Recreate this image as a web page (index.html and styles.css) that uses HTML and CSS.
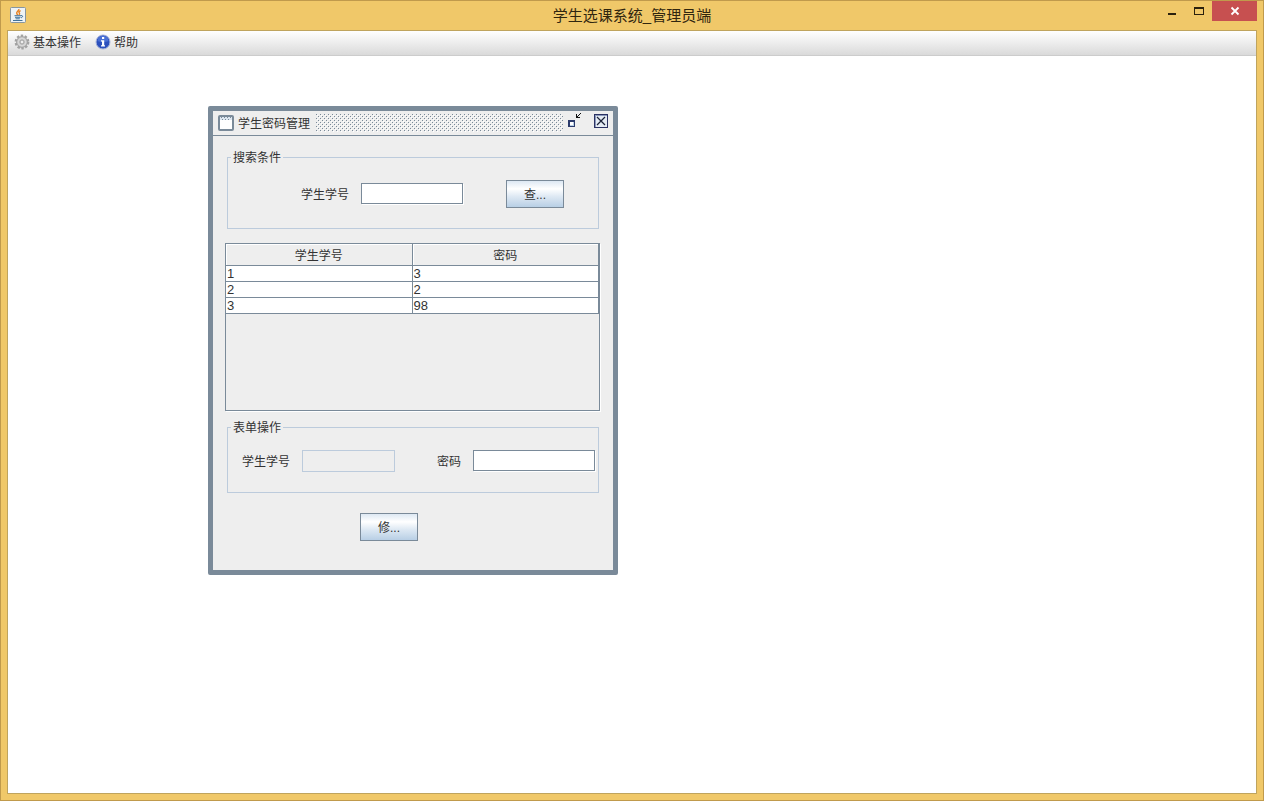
FILE: index.html
```html
<!DOCTYPE html>
<html lang="zh-CN">
<head>
<meta charset="UTF-8" />
<meta name="viewport" content="width=device-width, initial-scale=1" />
<title>学生选课系统_管理员端</title>
<link rel="stylesheet" href="styles.css">
</head>
<body>
<div class="window">
  <header class="titlebar">
    <svg class="app-icon" width="16" height="16" viewBox="0 0 16 16" aria-hidden="true">
      <rect x="0.5" y="0.5" width="15" height="15" rx="1" fill="#eef3f6" stroke="#8796a0"/>
      <path d="M8.800 2c.8 1.600-3 2.500-2 4.600.3.600.9 1 .9 1.400M10.600 3.600c-1.600.8-2.200 1.500-1.200 2.500.5.600 0 1.200-.5 1.600" fill="none" stroke="#e8801f" stroke-width="1.400"/>
      <path d="M4.500 8.700h6.500M5 10.300h5.500M5.600 11.800h4.200M3 13.500h9.500M11 8.600c2.300-.5 2 1.800 0 2.200" fill="none" stroke="#3f729b"/>
    </svg>
    <h1>学生选课系统_管理员端</h1>
    <div class="window-buttons">
      <button class="win-btn" type="button" aria-label="最小化">
        <svg width="10" height="10" viewBox="0 0 10 10"><path d="M1 7h8v2H1z" fill="#2b210d"/></svg>
      </button>
      <button class="win-btn" type="button" aria-label="最大化">
        <svg width="10" height="10" viewBox="0 0 10 10"><path d="M0 1h10v8H0zM1 3v5h8V3z" fill="#2b210d" fill-rule="evenodd"/></svg>
      </button>
      <button class="win-btn win-close" type="button" aria-label="关闭">
        <svg width="10" height="10" viewBox="0 0 10 10"><path d="M1.500 1.500l7 7M8.500 1.500l-7 7" stroke="#fff" stroke-width="1.800"/></svg>
      </button>
    </div>
  </header>

  <div class="client">
    <nav class="menubar">
      <button class="menu" type="button">
        <svg width="16" height="16" viewBox="0 0 16 16" aria-hidden="true">
          <circle cx="8" cy="8" r="6.300" fill="none" stroke="#a2a2a2" stroke-width="2.200" stroke-dasharray="2.400 1.558"/>
          <circle cx="8" cy="8" r="5.400" fill="#c9c9c9" stroke="#a0a0a0"/>
          <circle cx="8" cy="8" r="3.700" fill="none" stroke="#d8d8d8" stroke-width="1.200"/>
          <circle cx="8" cy="8" r="2" fill="#eee" stroke="#a0a0a0"/>
        </svg>
        <span>基本操作</span>
      </button>
      <button class="menu" type="button">
        <svg width="16" height="16" viewBox="0 0 16 16" aria-hidden="true">
          <circle cx="8" cy="8" r="7" fill="#2c50bd" stroke="#a9b6da"/>
          <path d="M2.500 7a5.500 5.500 0 0 1 11 0c-3 1.500-8 1.500-11 0z" fill="#4a70d4"/>
          <path d="M7 3h2.200v2H7zM6 6.300h3.200v5H10v1.200H6v-1.200h1V7.500H6z" fill="#fff"/>
        </svg>
        <span>帮助</span>
      </button>
    </nav>

    <main class="desktop">
      <section class="frame" aria-labelledby="frameTitle">
        <div class="frame-title">
          <svg width="16" height="16" viewBox="0 0 16 16" aria-hidden="true">
            <rect x="1" y="1" width="14" height="14" rx="1" fill="#fff" stroke="#7a8a99" stroke-width="2"/>
            <path d="M2 2h12v3H2z" fill="#dce6f0"/>
            <path d="M3 2.500h1M6 2.500h1M9 2.500h1M12 2.500h1M4 4.500h1M7 4.500h1M10 4.500h1" stroke="#7a8a99"/>
          </svg>
          <h2 id="frameTitle">学生密码管理</h2>
          <svg class="bumps" aria-hidden="true">
            <defs>
              <pattern id="bumpDots" width="4" height="4" patternUnits="userSpaceOnUse">
                <path d="M0 0h1v1H0zM2 2h1v1H2z" fill="#7a8a99"/>
                <path d="M1 1h1v1H1zM3 3h1v1H3z" fill="#fff"/>
              </pattern>
            </defs>
            <rect width="100%" height="100%" fill="url(#bumpDots)"/>
          </svg>
          <div class="frame-buttons">
            <button class="frame-btn" type="button" aria-label="最小化窗口">
              <svg width="16" height="16" viewBox="0 0 16 16">
                <path d="M2 7h7v7H2z" fill="#2b3a6b"/>
                <path d="M4 9h4v4H4z" fill="#b8cfe5"/>
                <path d="M4 9h3v3H4z" fill="#fff"/>
                <path d="M10 1h1v3h3v1h-4zM11 3h1V2h1V1h1V0h1v1h-1v1h-1v1h-1v1h-1z" fill="#111"/>
              </svg>
            </button>
            <button class="frame-btn" type="button" aria-label="关闭窗口">
              <svg width="16" height="16" viewBox="0 0 16 16">
                <path d="M1 1h14v14H1z" fill="#2b3263"/>
                <path d="M2 2h12v12H2z" fill="#8b99bb"/>
                <path d="M3 3h11v11H3z" fill="#e6ecf4"/>
                <path d="M4 4l8 8M12 4l-8 8" stroke="#1c2238" stroke-width="1.200"/>
              </svg>
            </button>
          </div>
        </div>

        <form class="frame-body">
          <fieldset class="group">
            <legend>搜索条件</legend>
            <div class="row search-row">
              <label for="searchId">学生学号</label>
              <input class="field search-field" id="searchId" type="text">
              <button class="btn" type="button">查...</button>
            </div>
          </fieldset>

          <div class="table-pane">
            <table>
              <thead>
                <tr><th>学生学号</th><th>密码</th></tr>
              </thead>
              <tbody>
                <tr><td>1</td><td>3</td></tr>
                <tr><td>2</td><td>2</td></tr>
                <tr><td>3</td><td>98</td></tr>
              </tbody>
            </table>
          </div>

          <fieldset class="group">
            <legend>表单操作</legend>
            <div class="row edit-row">
              <label for="studentId">学生学号</label>
              <input class="field id-field" id="studentId" type="text" disabled>
              <label class="pwd-label" for="password">密码</label>
              <input class="field pwd-field" id="password" type="text">
            </div>
          </fieldset>

          <div class="actions">
            <button class="btn" type="button">修...</button>
          </div>
        </form>
      </section>
    </main>
  </div>
</div>
</body>
</html>
```
FILE: styles.css
```css
/* Reset and base */
* {
  box-sizing: border-box;
  margin: 0;
  padding: 0;
}
body {
  font-family: "Liberation Sans", "Noto Sans CJK SC", sans-serif;
  font-size: 12px;
  line-height: 16px;
  color: #333;
}
button,
input {
  font: inherit;
  color: inherit;
}
button {
  border: none;
  background: none;
}
svg {
  display: block;
  flex: none;
}

/* Outer window */
.window {
  display: flex;
  flex-direction: column;
  min-height: 100vh;
  padding: 0 6px 6px;
  background: #f0c869;
  border: 1px solid #c09a4c;
}
.titlebar {
  display: grid;
  grid-template-columns: 1fr auto 1fr;
  height: 29px;
}
.app-icon {
  margin: 6px 0 0 3px;
}
.titlebar h1 {
  font-size: 15px;
  font-weight: 400;
  line-height: 30px;
  color: #30260f;
}
.window-buttons {
  display: flex;
  justify-content: flex-end;
}
.win-btn {
  display: flex;
  align-items: center;
  justify-content: center;
  width: 27px;
  height: 20px;
}
.win-close {
  width: 45px;
  background: #c75050;
}
.client {
  display: flex;
  flex-direction: column;
  flex: 1;
  background: #fff;
  border: 1px solid #bfa45e;
}

/* Menu bar */
.menubar {
  display: flex;
  gap: 14px;
  height: 25px;
  padding: 0 6px;
  background: linear-gradient(#fff, #dadada);
  border-bottom: 1px solid #ccc;
}
.menu {
  display: flex;
  align-items: center;
  gap: 3px;
  height: 22px;
}
.menu span {
  padding-top: 2px;
}

/* Internal frame */
.desktop {
  position: relative;
  flex: 1;
}
.frame {
  position: absolute;
  top: 50px;
  left: 200px;
  width: 410px;
  background: #eee;
  border: 5px solid #7a8a99;
  border-radius: 2px;
}
.frame-title {
  display: flex;
  align-items: center;
  height: 25px;
  padding: 0 4px 0 5px;
  border-bottom: 1px solid #7a8a99;
}
.frame-title h2 {
  margin: 0 6px 0 4px;
  padding-top: 2px;
  font-size: 12px;
  font-weight: 400;
}
.bumps {
  flex: 1;
  min-width: 0;
  height: 18px;
}
.frame-buttons {
  display: flex;
  align-self: flex-start;
  gap: 11px;
  padding: 2px 0 0 3px;
}
.frame-btn {
  width: 16px;
  height: 16px;
}
.frame-body {
  padding: 13px 13px 29px 12px;
}

/* Groups and fields */
.group {
  min-width: 0;
  margin: 0 1px 0 2px;
  padding: 15px 3px 20px;
  border: 1px solid #bccbdc;
}
.group legend {
  height: 16px;
  padding: 1px 2px 0;
}
.row {
  display: flex;
  align-items: center;
  gap: 12px;
}
.row label {
  padding-top: 2px;
}
.search-row {
  padding-left: 70px;
}
.search-row .btn {
  margin-left: 31px;
}
.edit-row {
  padding-left: 11px;
}
.field {
  min-width: 0;
  height: 21px;
  margin-bottom: 1px;
  padding: 0 2px;
  background: #fff;
  border: 1px solid #7a8a99;
  box-shadow: 1px 1px 0 #fff;
}
.field:disabled {
  height: 22px;
  margin-bottom: 0;
  background: #eee;
  border-color: #bccbdc;
  box-shadow: none;
}
.search-field {
  width: 102px;
}
.id-field {
  width: 93px;
}
.pwd-label {
  margin-left: 30px;
}
.pwd-field {
  flex: 1;
}
.btn {
  width: 58px;
  height: 28px;
  padding-top: 2px;
  border: 1px solid #7a8a99;
  background: linear-gradient(#dde8f3, #fff 30%, #dde8f3 60%, #b8cfe5);
}

/* Table */
.table-pane {
  height: 168px;
  margin: 14px 0 8px;
  border: 1px solid #7a8a99;
  box-shadow: 1px 1px 0 #fff;
}
table {
  width: 100%;
  table-layout: fixed;
  border-collapse: separate;
  border-spacing: 0;
}
th,
td {
  border-right: 1px solid #7a8a99;
  border-bottom: 1px solid #7a8a99;
}
th {
  height: 22px;
  padding-top: 2px;
  font-weight: 400;
  box-shadow: inset 1px 1px 0 #fff;
}
td {
  height: 16px;
  padding-left: 1px;
  font-size: 13px;
  line-height: 15px;
  background: #fff;
}
.actions {
  padding: 20px 0 0 135px;
}
```
